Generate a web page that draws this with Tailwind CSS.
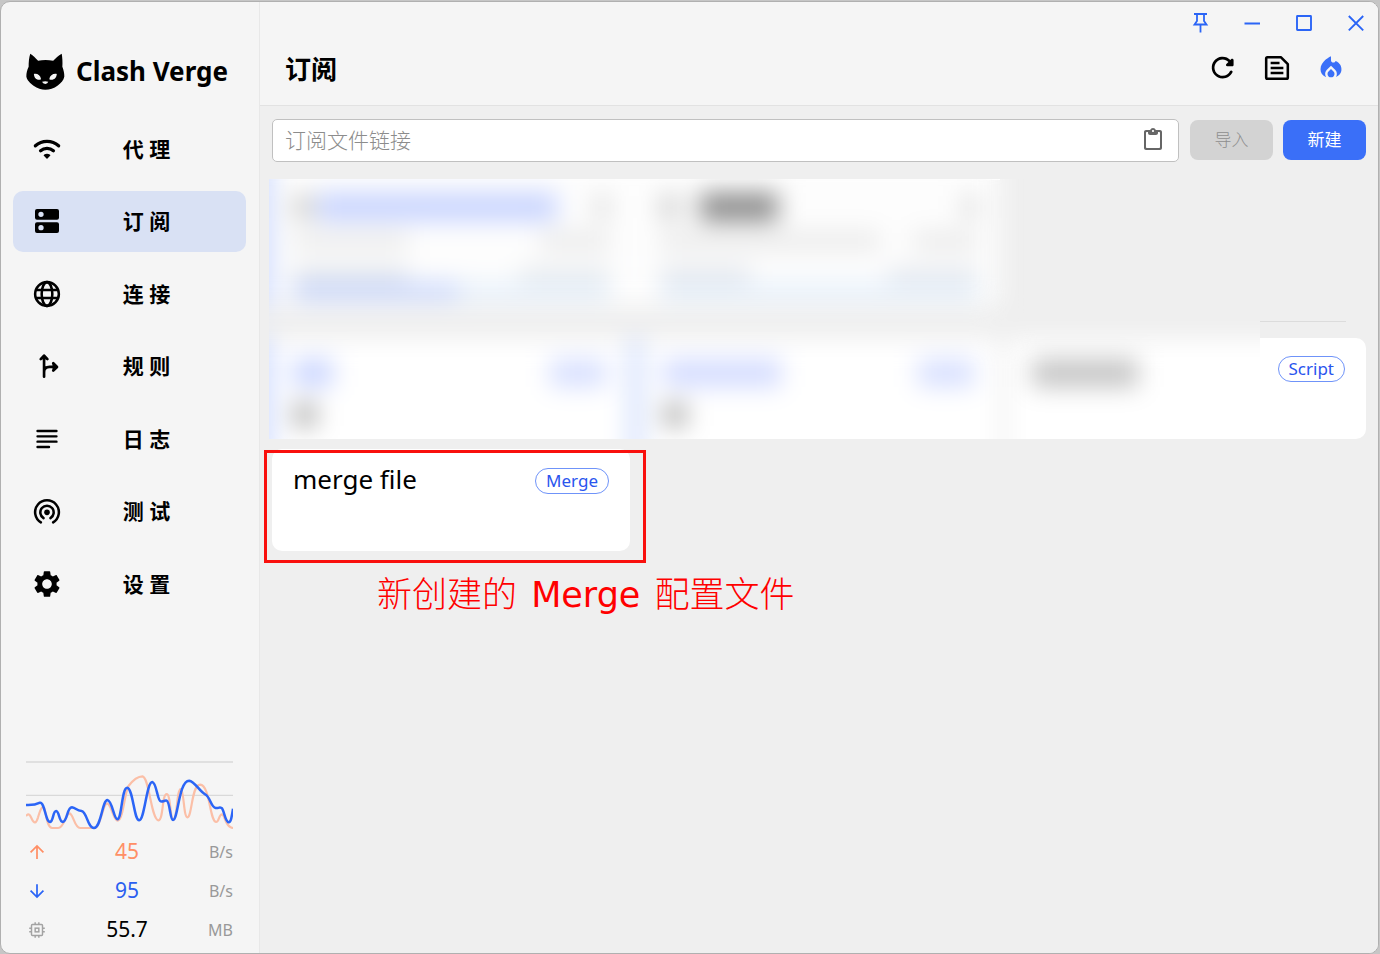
<!DOCTYPE html>
<html lang="zh-CN">
<head>
  <meta charset="UTF-8" />
  <meta name="viewport" content="width=device-width, initial-scale=1.0"/>
  <title>Clash Verge</title>
  <script src="https://cdn.jsdelivr.net/npm/@tailwindcss/browser@4"></script>
</head>
<body class="bg-[#c6c6c6] pt-px pr-px font-['Noto_Sans','Noto_Sans_CJK_SC',sans-serif] text-black">
  <div class="flex min-h-[calc(100vh-1px)] rounded-[10px] border border-[#b0b0b0] bg-[#f5f5f5] overflow-hidden">

    <!-- Sidebar -->
    <aside class="flex w-[259px] shrink-0 flex-col border-r border-[#e8e8e8] pt-[49px] pb-1">
      <div class="flex h-10 items-center gap-[11px] pl-[25px]">
        <svg class="h-[37px] w-[39px] shrink-0" viewBox="78 158 117 113" aria-hidden="true">
          <path d="M90 160C86 172 85 186 85 200C80 210 78 220 78 230C80 242 90 250 100 258C112 267 124 270 136 270C149 270 162 266 174 257C184 249 192 242 194 230C194 220 192 210 188 200C189 186 188 172 186 160C176 166 167 174 160 182C145 179 128 179 114 182C107 174 99 166 90 160Z"/>
          <path fill="#f5f5f5" d="M101 222C112 220 121 226 123 238C112 243 102 236 101 222ZM171 222C160 220 150 226 148 238C159 243 170 236 171 222ZM126 246Q136 243 145 246Q143 252 136 253Q128 252 126 246Z"/>
        </svg>
        <span class="text-[26px] leading-10 font-bold whitespace-nowrap">Clash Verge</span>
      </div>

      <nav class="mt-[27px] flex h-[496px] shrink-0 flex-col justify-between pr-[13px] pl-3 text-[21px] font-bold">
        <a href="#proxies" class="flex h-[61px] items-center rounded-[10px] pl-[18px]">
          <svg class="size-8 shrink-0" viewBox="0 0 24 24" fill="none" stroke="currentColor" stroke-width="2.5" stroke-linecap="round"><path d="M3.3 9.6C8.2 5.2 15.8 5.2 20.7 9.6M7.2 13.3C9.9 11 14.1 11 16.8 13.3"/><path d="M10 16.8Q12 15.3 14 16.8L12 18.8Z" fill="currentColor" stroke-width="1" stroke-linejoin="round"/></svg>
          <span class="flex-1 pt-0.5 pr-8 pl-4 text-center">代 理</span>
        </a>
        <a href="#profiles" class="flex h-[61px] items-center rounded-[10px] bg-[#d9e1f4] pl-[18px]">
          <svg class="size-8 shrink-0" viewBox="0 0 24 24" fill="currentColor"><path fill-rule="evenodd" d="M4.5 3h15A1.5 1.5 0 0 1 21 4.5v5A1.5 1.5 0 0 1 19.5 11h-15A1.5 1.5 0 0 1 3 9.5v-5A1.5 1.5 0 0 1 4.5 3ZM7.5 5a2 2 0 1 0 0 4 2 2 0 0 0 0-4ZM4.5 13h15a1.5 1.5 0 0 1 1.5 1.5v5a1.5 1.5 0 0 1-1.5 1.5h-15A1.5 1.5 0 0 1 3 19.5v-5A1.5 1.5 0 0 1 4.5 13ZM7.5 15a2 2 0 1 0 0 4 2 2 0 0 0 0-4Z"/></svg>
          <span class="flex-1 pt-0.5 pr-8 pl-4 text-center">订 阅</span>
        </a>
        <a href="#connections" class="flex h-[61px] items-center rounded-[10px] pl-[18px]">
          <svg class="size-8 shrink-0" viewBox="0 0 24 24" fill="none" stroke="currentColor" stroke-width="1.9"><circle cx="12" cy="12" r="8.9"/><ellipse cx="12" cy="12" rx="4" ry="8.9"/><path d="M3.6 9h16.8M3.6 15h16.8"/></svg>
          <span class="flex-1 pt-0.5 pr-8 pl-4 text-center">连 接</span>
        </a>
        <a href="#rules" class="flex h-[61px] items-center rounded-[10px] pl-[18px]">
          <svg class="size-8 shrink-0" viewBox="0 0 24 24" fill="none" stroke="currentColor" stroke-width="2" stroke-linecap="round" stroke-linejoin="round"><path d="M9.8 20V5M7.3 6.8L9.8 4.2L12.3 6.8M9.8 16.5C9.8 13.5 11.5 12.7 14 12.7H18M16.7 9.9L19.5 12.7L16.7 15.5"/><path d="M9.8 3.8L7.6 6.5H12ZM19.7 12.7L16.5 10V15.4Z" fill="currentColor" stroke-width=".8"/></svg>
          <span class="flex-1 pt-0.5 pr-8 pl-4 text-center">规 则</span>
        </a>
        <a href="#logs" class="flex h-[61px] items-center rounded-[10px] pl-[18px]">
          <svg class="size-8 shrink-0" viewBox="0 0 24 24" fill="none" stroke="currentColor" stroke-width="1.8" stroke-linecap="round"><path d="M4.9 6H19.1M4.9 10H19.1M4.9 14H19.1M4.9 18H13.5"/></svg>
          <span class="flex-1 pt-0.5 pr-8 pl-4 text-center">日 志</span>
        </a>
        <a href="#test" class="flex h-[61px] items-center rounded-[10px] pl-[18px]">
          <svg class="size-8 shrink-0" viewBox="0 0 24 24" fill="none" stroke="currentColor" stroke-width="1.9" stroke-linecap="round"><circle cx="12" cy="13" r="2.1" fill="currentColor" stroke="none"/><path d="M9.4 17.3a5 5 0 1 1 5.2 0M7.4 20.5a8.9 8.9 0 1 1 9.2 0"/></svg>
          <span class="flex-1 pt-0.5 pr-8 pl-4 text-center">测 试</span>
        </a>
        <a href="#settings" class="flex h-[61px] items-center rounded-[10px] pl-[18px]">
          <svg class="size-8 shrink-0" viewBox="0 0 24 24" fill="currentColor"><path d="M19.14 12.94c.04-.3.06-.61.06-.94 0-.32-.02-.64-.07-.94l2.03-1.58c.18-.14.23-.41.12-.61l-1.92-3.32c-.12-.22-.37-.29-.59-.22l-2.39.96c-.5-.38-1.03-.7-1.62-.94l-.36-2.54c-.04-.24-.24-.41-.48-.41h-3.84c-.24 0-.43.17-.47.41l-.36 2.54c-.59.24-1.13.57-1.62.94l-2.39-.96c-.22-.08-.47 0-.59.22L2.74 8.87c-.12.21-.08.47.12.61l2.03 1.58c-.05.3-.09.63-.09.94s.02.64.07.94l-2.03 1.58c-.18.14-.23.41-.12.61l1.92 3.32c.12.22.37.29.59.22l2.39-.96c.5.38 1.03.7 1.62.94l.36 2.54c.05.24.24.41.48.41h3.84c.24 0 .44-.17.47-.41l.36-2.54c.59-.24 1.13-.56 1.62-.94l2.39.96c.22.08.47 0 .59-.22l1.92-3.32c.12-.22.07-.47-.12-.61l-2.01-1.58zM12 15.6c-1.98 0-3.6-1.62-3.6-3.6s1.62-3.6 3.6-3.6 3.6 1.62 3.6 3.6-1.62 3.6-3.6 3.6z"/></svg>
          <span class="flex-1 pt-0.5 pr-8 pl-4 text-center">设 置</span>
        </a>
      </nav>

      <!-- Traffic graph and counters -->
      <div class="mt-auto pr-[26px] pl-[25px]">
        <svg class="h-[70px] w-full" viewBox="78 60 618 210" preserveAspectRatio="none" fill="none" aria-hidden="true">
          <path d="M78 66H696M78 166H696" stroke="#d9d9d9" stroke-width="4"/>
          <path stroke="#fbbfa7" stroke-width="6.5" d="M78 228C86 218 90 225 94 234C102 252 108 252 114 232C120 210 126 196 132 204C138 214 140 264 156 264H174C192 264 196 220 208 220C220 222 222 264 240 264H285C300 262 308 190 320 190C334 192 338 242 352 242C368 240 372 160 384 138C396 122 412 109 426 109C446 112 452 241 474 241C488 240 484 162 498 162C510 162 508 240 518 240C530 236 528 147 540 147C550 150 548 232 560 232C574 230 572 134 598 134C628 136 626 246 646 246C654 246 654 223 663 223C672 224 674 264 696 264"/>
          <path stroke="#2b65f6" stroke-width="7.5" d="M78 195C100 196 108 194 120 188C134 186 136 246 150 246C160 244 158 213 168 213C178 214 176 246 188 246C202 244 200 202 215 202C228 204 228 212 244 213C260 216 262 264 281 264C302 264 306 180 321 180C336 182 340 238 351 238C364 236 364 143 380 143C398 145 400 241 416 241C432 240 438 126 455 126C468 128 470 182 480 184C488 186 492 180 498 182C508 186 508 240 517 240C532 240 534 122 565 122C582 124 594 152 613 163C628 170 630 202 644 204C652 206 654 200 662 204C670 210 672 247 684 247C690 246 692 232 696 206"/>
        </svg>
        <dl class="mt-0.5">
          <div class="flex h-[39px] items-center">
            <svg class="size-[22px] shrink-0" viewBox="0 0 24 24" fill="none" stroke="#ff8f66" stroke-width="1.9"><path d="M12 19.5V5.500M5 12.3L12 5.3L19 12.3"/></svg>
            <dd class="flex-1 text-center text-[21px] text-[#ff8f66]">45</dd>
            <dt class="w-[27px] text-right text-base text-[#999]">B/s</dt>
          </div>
          <div class="flex h-[39px] items-center">
            <svg class="size-[22px] shrink-0" viewBox="0 0 24 24" fill="none" stroke="#2b65f6" stroke-width="1.9"><path d="M12 4.5V18.5M5 11.7L12 18.7L19 11.7"/></svg>
            <dd class="flex-1 text-center text-[21px] text-[#2b5ff0]">95</dd>
            <dt class="w-[27px] text-right text-base text-[#999]">B/s</dt>
          </div>
          <div class="flex h-[39px] items-center">
            <svg class="size-[22px] shrink-0" viewBox="0 0 24 24" fill="none" stroke="#a3a3a3" stroke-width="1.6"><rect x="6" y="6" width="12" height="12" rx="1"/><rect x="10" y="10" width="4" height="4"/><path d="M10 6V3.5M14 6V3.5M10 20.5V18M14 20.5V18M6 10H3.5M6 14H3.5M20.5 10H18M20.5 14H18"/></svg>
            <dd class="flex-1 text-center text-[21px]">55.7</dd>
            <dt class="w-[27px] text-right text-base text-[#999]">MB</dt>
          </div>
        </dl>
      </div>
    </aside>

    <!-- Main column -->
    <main class="flex min-w-0 flex-1 flex-col bg-[#efefef]">
      <header class="h-[104px] border-b border-[#e2e2e2] bg-[#f5f5f5]">
        <div class="flex h-[42px] items-center justify-end gap-7 pr-[10px] text-[#2b65f6]">
          <button type="button" aria-label="置顶"><svg class="size-6" viewBox="0 0 24 24" fill="none" stroke="currentColor" stroke-width="1.8"><path d="M6 3H19M9 3V10L6.5 13.5H18.5L16 10V3M12.5 13.5V21.500"/></svg></button>
          <button type="button" aria-label="最小化"><svg class="size-6" viewBox="0 0 24 24" fill="none" stroke="currentColor" stroke-width="1.9"><path d="M4.5 12.5H20"/></svg></button>
          <button type="button" aria-label="最大化"><svg class="size-6" viewBox="0 0 24 24" fill="none" stroke="currentColor" stroke-width="1.9"><rect x="5" y="5" width="14" height="14" rx=".5"/></svg></button>
          <button type="button" aria-label="关闭"><svg class="size-6" viewBox="0 0 24 24" fill="none" stroke="currentColor" stroke-width="1.9"><path d="M4.8 5L19.2 19.4M19.2 5L4.8 19.4"/></svg></button>
        </div>
        <div class="flex h-[50px] items-center justify-between pr-[33px] pl-[25px]">
          <h1 class="text-[26px] font-bold">订阅</h1>
          <div class="flex items-center gap-[26px] pb-0.5">
            <button type="button" aria-label="更新"><svg class="size-7" viewBox="2 2 20.500 20.500" fill="currentColor"><path d="M17.65 6.35c-1.63-1.63-3.94-2.57-6.48-2.31-3.67.37-6.69 3.35-7.1 7.02C3.52 15.91 7.27 20 12 20c3.19 0 5.93-1.87 7.21-4.56.32-.67-.16-1.44-.9-1.44-.37 0-.72.2-.88.53-1.13 2.43-3.84 3.97-6.8 3.31-2.22-.49-4.01-2.3-4.48-4.52C5.31 9.44 8.26 6 12 6c1.66 0 3.14.69 4.22 1.78l-1.51 1.51c-.63.63-.19 1.71.7 1.71H19c.55 0 1-.45 1-1V6.41c0-.89-1.08-1.34-1.71-.71l-.64.65z"/></svg></button>
            <button type="button" aria-label="运行时配置"><svg class="size-7" viewBox="1 1 22 22" fill="none" stroke="currentColor" stroke-width="2"><path stroke-linejoin="round" d="M4.5 3.5H15L20.5 9V19.5Q20.5 20.5 19.5 20.5H4.5Q3.5 20.5 3.5 19.5V4.5Q3.5 3.5 4.5 3.5Z"/><path d="M7 8H14M7 12H17M7 16H17"/></svg></button>
            <button type="button" aria-label="重新激活"><svg class="size-7 text-[#3a6ff8]" viewBox="0 0 24 24" fill="currentColor"><path d="M16 6l-.44.55C14.38 8.02 12 7.19 12 5.3V2S3 6 3 13c0 2.92 1.56 5.47 4.89 6.86-.56-.79-.89-1.76-.89-2.8 0-1.32.52-2.56 1.47-3.5L12 10.1l3.53 3.47c.95.93 1.47 2.17 1.47 3.5 0 1.02-.31 1.96-.85 2.75 2.2-1 4.3-3.06 4.7-5.3.66-3.55-1.07-6.9-4.85-8.52zM12 12.9l-2.13 2.09c-.56.56-.87 1.29-.87 2.07C9 18.68 10.35 20 12 20s3-1.32 3-2.94c0-.78-.31-1.52-.87-2.07L12 12.9z"/></svg></button>
          </div>
        </div>
      </header>

      <div class="pt-[13px] pr-3 pl-3">
        <form class="flex items-start">
          <label class="flex h-[43px] min-w-0 flex-1 items-center rounded-[5px] border border-[#c0c0c0] bg-white pr-[13px] pl-3">
            <input type="text" name="url" aria-label="订阅文件链接" placeholder="订阅文件链接" class="min-w-0 flex-1 bg-transparent text-[21px] font-light outline-none placeholder:text-[#8c8c8c]"/>
            <svg class="mb-0.5 size-6 shrink-0 text-[#666]" viewBox="0 0 24 24" fill="currentColor"><path d="M19 2h-4.180C14.4.84 13.3 0 12 0S9.6.84 9.18 2H5c-1.1 0-2 .9-2 2v16c0 1.1.9 2 2 2h14c1.1 0 2-.9 2-2V4c0-1.1-.9-2-2-2zm-7 0c.55 0 1 .45 1 1s-.45 1-1 1-1-.45-1-1 .45-1 1-1zm6 18H6c-.55 0-1-.45-1-1V5c0-.55.45-1 1-1h1v1c0 1.1.9 2 2 2h6c1.1 0 2-.9 2-2V4h1c.55 0 1 .45 1 1v14c0 .55-.45 1-1 1z"/></svg>
          </label>
          <button type="button" disabled class="mt-px ml-[11px] h-10 w-[83px] rounded-lg bg-[#d3d3d3] text-[17px] font-light text-[#8e8e8e]">导入</button>
          <button type="button" class="mt-px ml-[10px] h-10 w-[83px] rounded-lg bg-[#3a6ff8] text-[17px] text-white">新建</button>
        </form>

        <div class="relative mt-[17px] pt-[142px]">
          <hr class="mx-5 border-[#dcdcdc]"/>
          <div class="mt-4 grid grid-cols-3 gap-x-[10px]">
            <section class="col-start-3 flex h-[101px] justify-end rounded-[10px] bg-white px-[21px] pt-[18px]">
              <span class="h-[26px] rounded-full border border-[#6f93f9] px-[10px] text-[17px] leading-6 text-[#2a55ee]">Script</span>
            </section>
          </div>

          <!-- Blurred profiles -->
          <div class="absolute inset-y-0 right-[106px] -left-[3px] overflow-hidden bg-[#efefef]">
            <div class="ml-2 h-px w-[73%] bg-white"></div>
            <div class="-mr-[106px] -ml-5 blur-[12px]">
              <div class="grid grid-cols-3 gap-x-[10px] pl-[23px]">
                <div class="-mt-6 -ml-12 h-[150px] border-l-[49px] border-[#d3deff] bg-[#fdfdfd] pt-[37px] pr-5 pl-5">
                  <div class="flex items-center"><i class="mr-1 h-6 w-5 bg-[#cfcfcb]"></i><i class="h-7 w-[240px] bg-[#c8d4ff]"></i><i class="ml-auto h-6 w-4 bg-[#dedede]"></i></div>
                  <div class="mt-[10px] flex justify-between"><i class="h-5 w-[115px] bg-[#ececec]"></i><i class="h-5 w-[70px] bg-[#ebebeb]"></i></div>
                  <div class="mt-4 flex justify-between"><i class="h-4 w-[115px] bg-[#e4e7ec]"></i><i class="h-4 w-[90px] bg-[#e8ebee]"></i></div>
                  <div class="h-4 bg-[#e3eefa]"><i class="block h-4 w-[165px] bg-[#c3d2fb]"></i></div>
                </div>
                <div class="-mt-6 -ml-5 h-[150px] bg-[#fdfdfd] pt-[37px] pr-5 pl-10">
                  <div class="flex items-center"><i class="mr-5 h-6 w-5 bg-[#cfcfcf]"></i><i class="h-7 w-[78px] bg-[#8a8a8a]"></i><i class="ml-auto h-6 w-4 bg-[#dedede]"></i></div>
                  <div class="mt-[10px] flex justify-between"><i class="h-5 w-[220px] bg-[#ebebeb]"></i><i class="h-5 w-[65px] bg-[#ebebeb]"></i></div>
                  <div class="mt-4 flex justify-between"><i class="h-4 w-[90px] bg-[#e4e7ec]"></i><i class="h-4 w-[90px] bg-[#e6e9ee]"></i></div>
                  <div class="h-4 bg-[#e3eefa]"></div>
                </div>
              </div>
              <div class="mt-[33px] grid grid-cols-3 gap-x-[10px] pl-[23px]">
                <div class="-ml-12 h-[140px] border-l-[49px] border-[#d3deff] bg-white pt-5 pr-6 pl-5">
                  <div class="flex h-7 justify-between"><i class="w-10 bg-[#cbd6ff]"></i><i class="w-14 bg-[#d8e0ff]"></i></div>
                  <i class="mt-4 block size-6 bg-[#b4b4b4]"></i>
                </div>
                <div class="-ml-3 h-[140px] border-l-[15px] border-[#d3dffc] bg-white pt-5 pr-6 pl-5">
                  <div class="flex h-7 justify-between"><i class="w-[118px] bg-[#d4dcff]"></i><i class="w-14 bg-[#d8e0ff]"></i></div>
                  <i class="mt-4 block size-6 bg-[#b4b4b4]"></i>
                </div>
                <div class="h-[140px] bg-white pt-5 pl-6">
                  <i class="block h-7 w-[106px] bg-[#c4c4c4]"></i>
                </div>
              </div>
            </div>
          </div>
        </div>

        <div class="mt-[10px] grid grid-cols-3 gap-x-[10px]">
          <section class="relative flex h-[102px] items-start justify-between rounded-[10px] bg-white px-[21px] pt-[19px]">
            <h2 class="-mt-[9px] text-[26px] leading-10">merge file</h2>
            <span class="h-[26px] rounded-full border border-[#6f93f9] px-[10px] text-[17px] leading-6 text-[#2a55ee]">Merge</span>
            <!-- Annotation frame and caption -->
            <div class="pointer-events-none absolute top-px -right-4 -bottom-3 -left-2 border-[3px] border-[#f9100d]"></div>
            <p class="pointer-events-none absolute top-[121px] left-[105px] font-['DejaVu_Sans','Noto_Sans_CJK_SC',sans-serif] text-[35px] leading-[50px] font-light whitespace-nowrap text-[#ff0000]">新创建的 <span class="mx-[3px] font-normal">Merge</span> 配置文件</p>
          </section>
        </div>
      </div>
    </main>
  </div>
</body>
</html>
